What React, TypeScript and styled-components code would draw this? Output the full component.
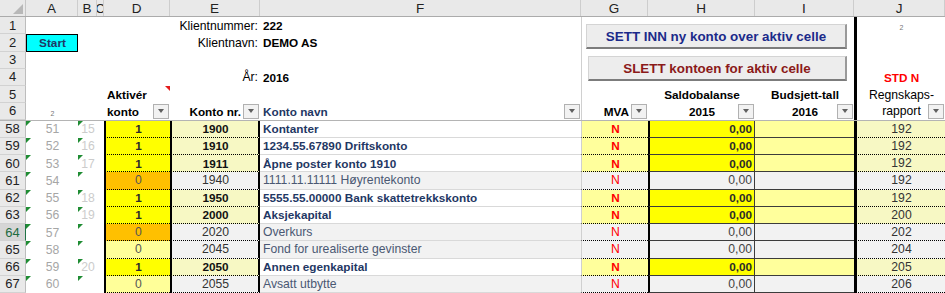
import React from 'react'
import styled, { createGlobalStyle, css } from 'styled-components'

// column widths: row numbers, A, B, C, D, E, F, G, H, I, J
const COLS = '26px 52px 19px 7px 66px 90px 321px 67px 107px 99px 91px'
const ROW_H = '17.25px'
const LETTERS = ['A', 'B', 'C', 'D', 'E', 'F', 'G', 'H', 'I', 'J']

type Flag = 'on' | 'warn' | 'off'

interface Account {
  seq: number
  ref: string
  flag: Flag
  nr: string
  name: string
  report: string
}

const ACCOUNTS: Account[] = [
  { seq: 51, ref: '15', flag: 'on', nr: '1900', name: 'Kontanter', report: '192' },
  { seq: 52, ref: '16', flag: 'on', nr: '1910', name: '1234.55.67890 Driftskonto', report: '192' },
  { seq: 53, ref: '17', flag: 'on', nr: '1911', name: 'Åpne poster konto 1910', report: '192' },
  { seq: 54, ref: '', flag: 'warn', nr: '1940', name: '1111.11.11111 Høyrentekonto', report: '192' },
  { seq: 55, ref: '18', flag: 'on', nr: '1950', name: '5555.55.00000 Bank skattetrekkskonto', report: '192' },
  { seq: 56, ref: '19', flag: 'on', nr: '2000', name: 'Aksjekapital', report: '200' },
  { seq: 57, ref: '', flag: 'warn', nr: '2020', name: 'Overkurs', report: '202' },
  { seq: 58, ref: '', flag: 'off', nr: '2045', name: 'Fond for urealiserte gevinster', report: '204' },
  { seq: 59, ref: '20', flag: 'on', nr: '2050', name: 'Annen egenkapital', report: '205' },
  { seq: 60, ref: '', flag: 'off', nr: '2055', name: 'Avsatt utbytte', report: '206' },
]

const FLAG_BG: Record<Flag, string> = {
  on: '#ffff00',
  warn: '#ffc000',
  off: '#ffff99',
}

const App = () => {
  return (
    <>
      <GlobalStyle />
      <Sheet>
        <HeaderBar>
          <Corner />
          {LETTERS.map(l => (
            <ColLetter key={l}>{l}</ColLetter>
          ))}
        </HeaderBar>

        <Row>
          <RowNum>1</RowNum>
          <Cell />
          <Cell />
          <Cell />
          <Cell />
          <Cell $align='right'>Klientnummer:</Cell>
          <Cell $bold>222</Cell>
          <HeadCell $rule='grid' />
          <Cell />
          <Cell />
          <HeadCell $rule='heavy' $align='center'>
            <Tiny>2</Tiny>
          </HeadCell>
        </Row>

        <Row>
          <RowNum>2</RowNum>
          <StartCell $bold>Start</StartCell>
          <Cell />
          <Cell />
          <Cell />
          <Cell $align='right'>Klientnavn:</Cell>
          <Cell $bold>DEMO AS</Cell>
          <HeadCell $rule='grid' />
          <Cell />
          <Cell />
          <HeadCell $rule='heavy' />
        </Row>

        <Row>
          <RowNum>3</RowNum>
          <Cell />
          <Cell />
          <Cell />
          <Cell />
          <Cell />
          <Cell />
          <HeadCell $rule='grid' />
          <Cell />
          <Cell />
          <HeadCell $rule='heavy' />
        </Row>

        <Row>
          <RowNum>4</RowNum>
          <Cell />
          <Cell />
          <Cell />
          <Cell />
          <Cell $align='right'>År:</Cell>
          <Cell $bold>2016</Cell>
          <HeadCell $rule='grid' />
          <Cell />
          <Cell />
          <HeadCell $rule='heavy' $align='center' $bold $color='#ff0000'>
            STD N
          </HeadCell>
        </Row>

        <Row>
          <RowNum>5</RowNum>
          <Cell />
          <Cell />
          <Cell />
          <NoteCell $bold>Aktivér</NoteCell>
          <Cell />
          <Cell />
          <HeadCell $rule='grid' />
          <Cell $align='center' $bold>
            Saldobalanse
          </Cell>
          <Cell $align='center' $bold>
            Budsjett-tall
          </Cell>
          <HeadCell $rule='heavy' $align='center'>
            Regnskaps-
          </HeadCell>
        </Row>

        <Row $freeze>
          <RowNum>6</RowNum>
          <Cell $align='center'>
            <Tiny>2</Tiny>
          </Cell>
          <Cell />
          <Cell />
          <Cell $bold>
            konto
            <FilterBtn />
          </Cell>
          <Cell $align='right' $bold $pad={19}>
            Konto nr.
            <FilterBtn />
          </Cell>
          <Cell $bold $color='#1f3864'>
            Konto navn
            <FilterBtn />
          </Cell>
          <HeadCell $rule='grid' $align='right' $bold $pad={19}>
            MVA
            <FilterBtn />
          </HeadCell>
          <Cell $align='center' $bold>
            2015
            <FilterBtn />
          </Cell>
          <Cell $align='center' $bold>
            2016
            <FilterBtn />
          </Cell>
          <HeadCell $rule='heavy' $align='center'>
            rapport
            <FilterBtn />
          </HeadCell>
        </Row>

        {ACCOUNTS.map((a, i) => {
          const on = a.flag === 'on'
          const rowNo = 58 + i
          return (
            <Row key={a.nr}>
              <RowNum $active={rowNo === 64}>{rowNo}</RowNum>
              <SeqCell>{a.seq}</SeqCell>
              <RefCell>{a.ref}</RefCell>
              <Cell />
              <FlagCell $flag={a.flag} $bold={on}>
                {on ? 1 : 0}
              </FlagCell>
              <AccountCell $on={on} $bold={on}>
                {a.nr}
              </AccountCell>
              <NameCell $on={on} $bold={on}>
                {a.name}
              </NameCell>
              <VatCell $on={on} $bold={on}>
                N
              </VatCell>
              <BalanceCell $on={on} $bold={on}>
                0,00
              </BalanceCell>
              <BudgetCell $on={on} />
              <ReportCell $on={on}>{a.report}</ReportCell>
            </Row>
          )
        })}

        <ActionButton $top={24} $left={586} $width={261} $tone='#1b2a8a'>
          SETT INN ny konto over aktiv celle
        </ActionButton>
        <ActionButton $top={56} $left={588} $width={259} $tone='#8b1a1a'>
          SLETT kontoen for aktiv celle
        </ActionButton>
      </Sheet>
    </>
  )
}

export default App

const GlobalStyle = createGlobalStyle`
  html, body {
    margin: 0;
    padding: 0;
    background: #fff;
  }
  body {
    font-family: 'Liberation Sans', Arial, sans-serif;
  }
  * {
    box-sizing: border-box;
  }
`

const Sheet = styled.div`
  position: relative;
  width: 945px;
  height: 293px;
  overflow: hidden;
  background: #fff;
`

const HeaderBar = styled.div`
  display: grid;
  grid-template-columns: ${COLS};
  height: 17px;
  background: #e9e9e9;
  border-bottom: 1px solid #ababab;
`

const Corner = styled.div`
  position: relative;
  border-right: 1px solid #c6c6c6;

  &::after {
    content: '';
    position: absolute;
    right: 2px;
    bottom: 2px;
    border-bottom: 10px solid #b8b8b8;
    border-left: 10px solid transparent;
  }
`

const ColLetter = styled.div`
  display: flex;
  align-items: center;
  justify-content: center;
  overflow: hidden;
  font-size: 13.5px;
  color: #222;
  border-right: 1px solid #cdcdcd;
`

const Row = styled.div<{ $freeze?: boolean }>`
  display: grid;
  grid-template-columns: ${COLS};
  height: ${ROW_H};
  ${p =>
    p.$freeze &&
    css`
      border-bottom: 1px solid #b4b4b4;
    `}
`

const RowNum = styled.div<{ $active?: boolean }>`
  display: flex;
  align-items: center;
  justify-content: center;
  font-size: 13px;
  color: ${p => (p.$active ? '#1e6b41' : '#222')};
  background: ${p => (p.$active ? '#d6d6d6' : '#e9e9e9')};
  border-right: 1px solid ${p => (p.$active ? '#217346' : '#bdbdbd')};
  border-bottom: 1px solid #d2d2d2;
`

const Cell = styled.div<{
  $align?: 'left' | 'center' | 'right'
  $bold?: boolean
  $color?: string
  $pad?: number
}>`
  position: relative;
  display: flex;
  align-items: center;
  justify-content: ${p =>
    p.$align === 'right' ? 'flex-end' : p.$align === 'center' ? 'center' : 'flex-start'};
  min-width: 0;
  padding: 0 ${p => p.$pad ?? 2}px 0 3px;
  font-size: ${p => (p.$bold ? 11.75 : 12.2)}px;
  font-weight: ${p => (p.$bold ? 700 : 400)};
  color: ${p => p.$color ?? '#000'};
  white-space: nowrap;
`

const HeadCell = styled(Cell)<{ $rule: 'grid' | 'heavy' }>`
  border-left: ${p => (p.$rule === 'heavy' ? '3px solid #000' : '1px solid #d0d0d0')};
`

const NoteCell = styled(Cell)`
  &::after {
    content: '';
    position: absolute;
    top: 0;
    right: 0;
    border-top: 5px solid #e41b1b;
    border-left: 5px solid transparent;
  }
`

const StartCell = styled(Cell)`
  justify-content: center;
  background: #00ffff;
  border: 1px solid #000;
  color: #1f3864;
`

const Tiny = styled.span`
  font-size: 7px;
  font-weight: 400;
  color: #777;
  margin-top: 4px;
`

const FilterBtn = styled.span`
  position: absolute;
  right: 1px;
  bottom: 1px;
  width: 16px;
  height: 15px;
  display: flex;
  align-items: center;
  justify-content: center;
  background: #f2f2f2;
  border: 1px solid #b1b1b1;

  &::after {
    content: '';
    border-left: 3.5px solid transparent;
    border-right: 3.5px solid transparent;
    border-top: 4px solid #5f5f5f;
  }
`

const errorMark = css`
  &::before {
    content: '';
    position: absolute;
    top: 0;
    left: 0;
    border-top: 5px solid #1f8c33;
    border-right: 5px solid transparent;
  }
`

const SeqCell = styled(Cell)`
  justify-content: center;
  color: #a6a6a6;
  ${errorMark}
`

const RefCell = styled(Cell)`
  justify-content: center;
  color: #cccccc;
  ${errorMark}
`

const dotted = css`
  border-bottom: 1px dotted #000;
`

const FlagCell = styled(Cell)<{ $flag: Flag }>`
  justify-content: center;
  background: ${p => FLAG_BG[p.$flag]};
  border-left: 2px solid #000;
  color: ${p => (p.$flag === 'on' ? '#2b2b2b' : '#555')};
  ${dotted}
`

const AccountCell = styled(Cell)<{ $on: boolean }>`
  justify-content: center;
  background: ${p => (p.$on ? '#f7f8c4' : '#f2f2f2')};
  border-left: 2px solid #000;
  border-right: 2px solid #000;
  color: ${p => (p.$on ? '#111' : '#333')};
  ${dotted}
`

const NameCell = styled(Cell)<{ $on: boolean }>`
  background: ${p => (p.$on ? '#fff' : '#f2f2f2')};
  border-bottom: 1px solid #d9d9d9;
  color: ${p => (p.$on ? '#1f3864' : '#4a5873')};
`

const VatCell = styled(Cell)<{ $on: boolean }>`
  justify-content: center;
  background: ${p => (p.$on ? '#ffff9c' : '#f2f2f2')};
  border-left: 1px solid #d0d0d0;
  color: #ff0000;
  ${dotted}
`

const BalanceCell = styled(Cell)<{ $on: boolean }>`
  justify-content: flex-end;
  background: ${p => (p.$on ? '#ffff00' : '#f2f2f2')};
  border-left: 2px solid #000;
  border-right: 1px solid #3c3c3c;
  border-bottom: 1px solid #3c3c3c;
  color: ${p => (p.$on ? '#2b2b2b' : '#444')};
`

const BudgetCell = styled(Cell)<{ $on: boolean }>`
  background: ${p => (p.$on ? '#ffff9c' : '#f2f2f2')};
  border-bottom: 1px solid #3c3c3c;
`

const ReportCell = styled(Cell)<{ $on: boolean }>`
  justify-content: center;
  background: ${p => (p.$on ? '#f7f8c4' : '#f2f2f2')};
  border-left: 3px solid #000;
  color: #333;
  ${dotted}
`

const ActionButton = styled.div<{ $top: number; $left: number; $width: number; $tone: string }>`
  position: absolute;
  top: ${p => p.$top}px;
  left: ${p => p.$left}px;
  width: ${p => p.$width}px;
  height: 25px;
  display: flex;
  align-items: center;
  justify-content: center;
  background: #ededed;
  border: 1px solid #d4d4d4;
  border-right: 2px solid #9a9a9a;
  border-bottom: 2px solid #7c7c7c;
  font-size: 13.4px;
  font-weight: 700;
  color: ${p => p.$tone};
  white-space: nowrap;
`
